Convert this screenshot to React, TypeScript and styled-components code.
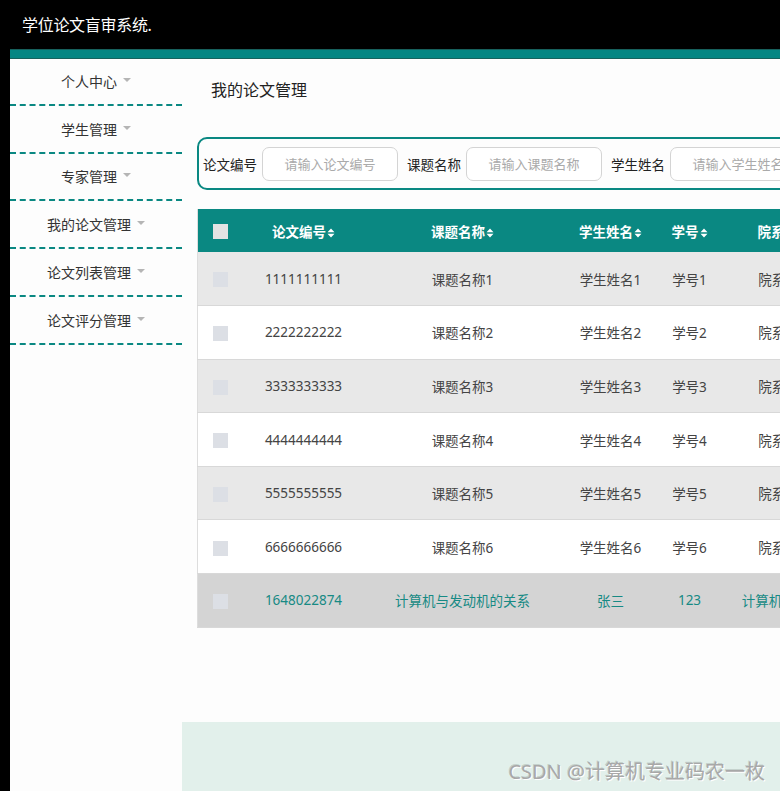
import React from "react";
import styled, {createGlobalStyle, css} from "styled-components";

const teal = "#0a8882";
const font = `"Noto Sans", "Noto Sans CJK SC", sans-serif`;

const GlobalStyle = createGlobalStyle`
	html, body {
		margin: 0;
		padding: 0;
		background: #000;
		overflow: hidden;
		font-family: ${font};
	}
	* {
		box-sizing: border-box;
	}
`;

const Page = styled.div`
	width: 780px;
	height: 791px;
	background: #000;
	overflow: hidden;
`;

const TopBar = styled.header`
	height: 49px;
	display: flex;
	align-items: center;
	padding: 0 0 2px 22px;
	color: #fff;
	font-size: 16px;
	letter-spacing: -0.3px;
`;

const Frame = styled.div`
	margin-left: 10px;
	background: #fdfdfd;
`;

const AccentBar = styled.div`
	height: 10px;
	background: #048683;
	border-top: 1px solid #17615d;
	border-bottom: 1px solid #17615d;
`;

const Body = styled.div`
	display: flex;
	height: 732px;
`;

const Sidebar = styled.nav`
	width: 172px;
	flex: none;
	margin-top: -1px;
`;

const MenuItem = styled.div`
	height: 47.8px;
	display: flex;
	align-items: center;
	justify-content: center;
	gap: 6px;
	font-size: 14px;
	color: #333;
	border-bottom: 2px dashed ${teal};
`;

const Caret = styled.span`
	width: 0;
	height: 0;
	border-left: 4px solid transparent;
	border-right: 4px solid transparent;
	border-top: 4px solid #b5b5b5;
	margin-top: -2px;
`;

const Main = styled.main`
	flex: 1;
	min-width: 0;
	display: flex;
	flex-direction: column;
	overflow: hidden;
`;

const Content = styled.div`
	padding-left: 15px;
`;

const Title = styled.h2`
	margin: 0;
	padding: 21px 0 0 14px;
	height: 78px;
	font-size: 16px;
	line-height: 20px;
	font-weight: normal;
	color: #222;
`;

const SearchBox = styled.div`
	width: 760px;
	height: 53px;
	display: flex;
	align-items: center;
	padding: 0 4px;
	border: 2px solid ${teal};
	border-radius: 10px;
`;

const Label = styled.span`
	font-size: 13.5px;
	color: #222;
	margin-right: 5px;
	white-space: nowrap;
`;

const Input = styled.input`
	width: 136px;
	height: 34px;
	margin-right: 9px;
	border: 1px solid #d4d4d4;
	border-radius: 7px;
	text-align: center;
	font-family: ${font};
	font-size: 13px;
	color: #333;
	outline: none;
	&::placeholder {
		color: #aaa;
	}
`;

const Table = styled.table`
	margin-top: 19px;
	border-collapse: collapse;
	table-layout: fixed;
	width: 900px;
	border-left: 1px solid #ddd;
`;

const HeadRow = styled.tr`
	height: 43px;
	background: ${teal};
`;

const Th = styled.th`
	color: #fff;
	font-size: 13.5px;
	font-weight: bold;
	text-align: center;
	padding: 0;
	white-space: nowrap;
`;

const Row = styled.tr<{$tone: "grey" | "white" | "active"}>`
	height: 53.6px;
	border-bottom: 1px solid #d8d8d8;
	${({$tone}) => {
		switch ($tone) {
			case "grey":
				return css`
					background: #e8e8e8;
					color: #444;
				`;
			case "active":
				return css`
					background: #d4d4d4;
					color: #178a84;
				`;
			default:
				return css`
					background: #fff;
					color: #444;
				`;
		}
	}};
`;

const Td = styled.td`
	font-size: 13.5px;
	text-align: center;
	padding: 0;
	white-space: nowrap;
	overflow: hidden;
`;

const Check = styled.span<{$head?: boolean}>`
	display: inline-block;
	width: 15px;
	height: 15px;
	vertical-align: middle;
	background: ${({$head}) => ($head ? "#e3e3e3" : "#dcdfe5")};
`;

const SortIcon = () => (
	<svg width="8" height="10" viewBox="0 0 8 10" style={{marginLeft: 1, verticalAlign: "-1px"}}>
		<path d="M4 0.5 L7.5 4.2 H0.5 Z M4 9.5 L7.5 5.8 H0.5 Z" fill="#fff" />
	</svg>
);

const Footer = styled.footer`
	margin-top: auto;
	height: 69px;
	background: #e2f0eb;
	display: flex;
	align-items: flex-end;
	justify-content: flex-end;
	padding: 0 15px 6px 0;
	font-size: 20px;
	color: #a8a8a8;
	text-shadow: 1px 1px 0 #fff, -1px -1px 0 rgba(0, 0, 0, 0.15);
`;

const menu = ["个人中心", "学生管理", "专家管理", "我的论文管理", "论文列表管理", "论文评分管理"];

const columns = ["论文编号", "课题名称", "学生姓名", "学号", "院系", "指导教师"];
const widths = [46, 120, 198, 98, 60, 112, 120, 146];

const rows = [
	["1111111111", "课题名称1", "学生姓名1", "学号1", "院系1", "指导教师1"],
	["2222222222", "课题名称2", "学生姓名2", "学号2", "院系2", "指导教师2"],
	["3333333333", "课题名称3", "学生姓名3", "学号3", "院系3", "指导教师3"],
	["4444444444", "课题名称4", "学生姓名4", "学号4", "院系4", "指导教师4"],
	["5555555555", "课题名称5", "学生姓名5", "学号5", "院系5", "指导教师5"],
	["6666666666", "课题名称6", "学生姓名6", "学号6", "院系6", "指导教师6"],
	["1648022874", "计算机与发动机的关系", "张三", "123", "计算机学院", "李四"],
];

export default function App() {
	return (
		<Page>
			<GlobalStyle />
			<TopBar>学位论文盲审系统.</TopBar>
			<Frame>
				<AccentBar />
				<Body>
					<Sidebar>
						{menu.map(m => (
							<MenuItem key={m}>
								{m}
								<Caret />
							</MenuItem>
						))}
					</Sidebar>
					<Main>
						<Content>
							<Title>我的论文管理</Title>
							<SearchBox>
								<Label>论文编号</Label>
								<Input placeholder="请输入论文编号" />
								<Label>课题名称</Label>
								<Input placeholder="请输入课题名称" />
								<Label>学生姓名</Label>
								<Input placeholder="请输入学生姓名" />
							</SearchBox>
							<Table>
								<colgroup>
									{widths.map((w, i) => (
										<col key={i} style={{width: w}} />
									))}
								</colgroup>
								<thead>
									<HeadRow>
										<Th>
											<Check $head />
										</Th>
										{columns.map(c => (
											<Th key={c}>
												{c}
												<SortIcon />
											</Th>
										))}
										<Th>操作</Th>
									</HeadRow>
								</thead>
								<tbody>
									{rows.map((r, i) => (
										<Row
											key={r[0]}
											$tone={i === rows.length - 1 ? "active" : i % 2 === 0 ? "grey" : "white"}
										>
											<Td>
												<Check />
											</Td>
											{r.map((v, j) => (
												<Td key={j}>{v}</Td>
											))}
											<Td>详情</Td>
										</Row>
									))}
								</tbody>
							</Table>
						</Content>
						<Footer>CSDN @计算机专业码农一枚</Footer>
					</Main>
				</Body>
			</Frame>
		</Page>
	);
}
